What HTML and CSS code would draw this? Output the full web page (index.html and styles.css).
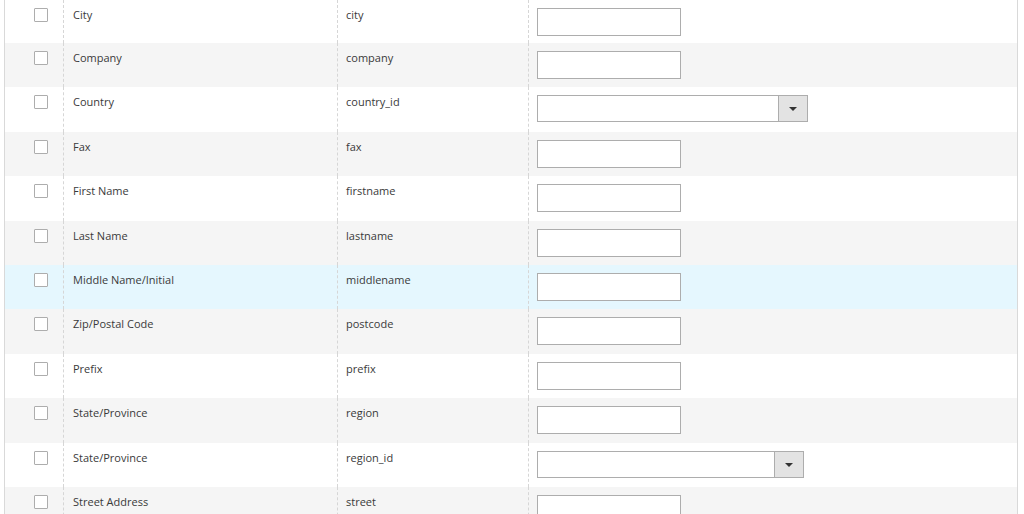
FILE: index.html
```html
<!DOCTYPE html>
<html>
<head>
<meta charset="utf-8">
<link rel="stylesheet" href="styles.css">
</head>
<body>
<div class="grid">
  <div class="row first"><div class="c chk"><span class="box"></span></div><div class="c label">City</div><div class="c code">city</div><div class="c field"><span class="input"></span></div></div>
  <div class="row alt"><div class="c chk"><span class="box"></span></div><div class="c label">Company</div><div class="c code">company</div><div class="c field"><span class="input"></span></div></div>
  <div class="row"><div class="c chk"><span class="box"></span></div><div class="c label">Country</div><div class="c code">country_id</div><div class="c field"><span class="select wide"><span class="arrow"></span></span></div></div>
  <div class="row alt"><div class="c chk"><span class="box"></span></div><div class="c label">Fax</div><div class="c code">fax</div><div class="c field"><span class="input"></span></div></div>
  <div class="row"><div class="c chk"><span class="box"></span></div><div class="c label">First Name</div><div class="c code">firstname</div><div class="c field"><span class="input"></span></div></div>
  <div class="row alt"><div class="c chk"><span class="box"></span></div><div class="c label">Last Name</div><div class="c code">lastname</div><div class="c field"><span class="input"></span></div></div>
  <div class="row hover"><div class="c chk"><span class="box"></span></div><div class="c label">Middle Name/Initial</div><div class="c code">middlename</div><div class="c field"><span class="input"></span></div></div>
  <div class="row alt"><div class="c chk"><span class="box"></span></div><div class="c label">Zip/Postal Code</div><div class="c code">postcode</div><div class="c field"><span class="input"></span></div></div>
  <div class="row"><div class="c chk"><span class="box"></span></div><div class="c label">Prefix</div><div class="c code">prefix</div><div class="c field"><span class="input"></span></div></div>
  <div class="row alt"><div class="c chk"><span class="box"></span></div><div class="c label">State/Province</div><div class="c code">region</div><div class="c field"><span class="input"></span></div></div>
  <div class="row"><div class="c chk"><span class="box"></span></div><div class="c label">State/Province</div><div class="c code">region_id</div><div class="c field"><span class="select narrow"><span class="arrow"></span></span></div></div>
  <div class="row alt"><div class="c chk"><span class="box"></span></div><div class="c label">Street Address</div><div class="c code">street</div><div class="c field"><span class="input"></span></div></div>
</div>
</body>
</html>
```
FILE: styles.css
```css
html, body {
  margin: 0;
  padding: 0;
  background: #ffffff;
  overflow: hidden;
}
body {
  font-family: "Open Sans", "Liberation Sans", sans-serif;
  font-size: 11px;
  color: #3a3a3a;
}
.grid {
  margin-left: 4px;
  width: 1012px;
  border-left: 1px solid #d9d9d9;
  border-right: 1px solid #d9d9d9;
}
.row {
  display: grid;
  grid-template-columns: 59px 274px 191px 1fr;
  height: 44.4px;
  background: #ffffff;
}
.row.first {
  height: 43px;
}
.row.alt {
  background: #f5f5f5;
}
.row.hover {
  background: #e5f7fe;
}
.c {
  box-sizing: border-box;
  border-right: 1px dashed #d6d6d6;
  line-height: 18px;
  padding-top: 6px;
}
.c.field {
  border-right: none;
  padding-left: 8px;
  padding-top: 8px;
}
.chk {
  padding-left: 29px;
  padding-top: 8px;
}
.box {
  display: block;
  width: 12px;
  height: 12px;
  border: 1px solid #adadad;
  background: #ffffff;
  border-radius: 1px;
}
.label {
  padding-left: 9px;
}
.code {
  padding-left: 8px;
}
.input {
  display: block;
  box-sizing: border-box;
  width: 144px;
  height: 28px;
  border: 1px solid #adadad;
  background: #ffffff;
}
.select {
  display: flex;
  justify-content: flex-end;
  box-sizing: border-box;
  height: 27px;
  border: 1px solid #adadad;
  background: #ffffff;
}
.select.wide {
  width: 271px;
}
.select.narrow {
  width: 267px;
}
.arrow {
  position: relative;
  width: 28px;
  background: #e3e3e3;
  border-left: 1px solid #adadad;
}
.arrow::after {
  content: "";
  position: absolute;
  left: 10px;
  top: 11px;
  border-left: 4px solid transparent;
  border-right: 4px solid transparent;
  border-top: 4px solid #333333;
}
```
